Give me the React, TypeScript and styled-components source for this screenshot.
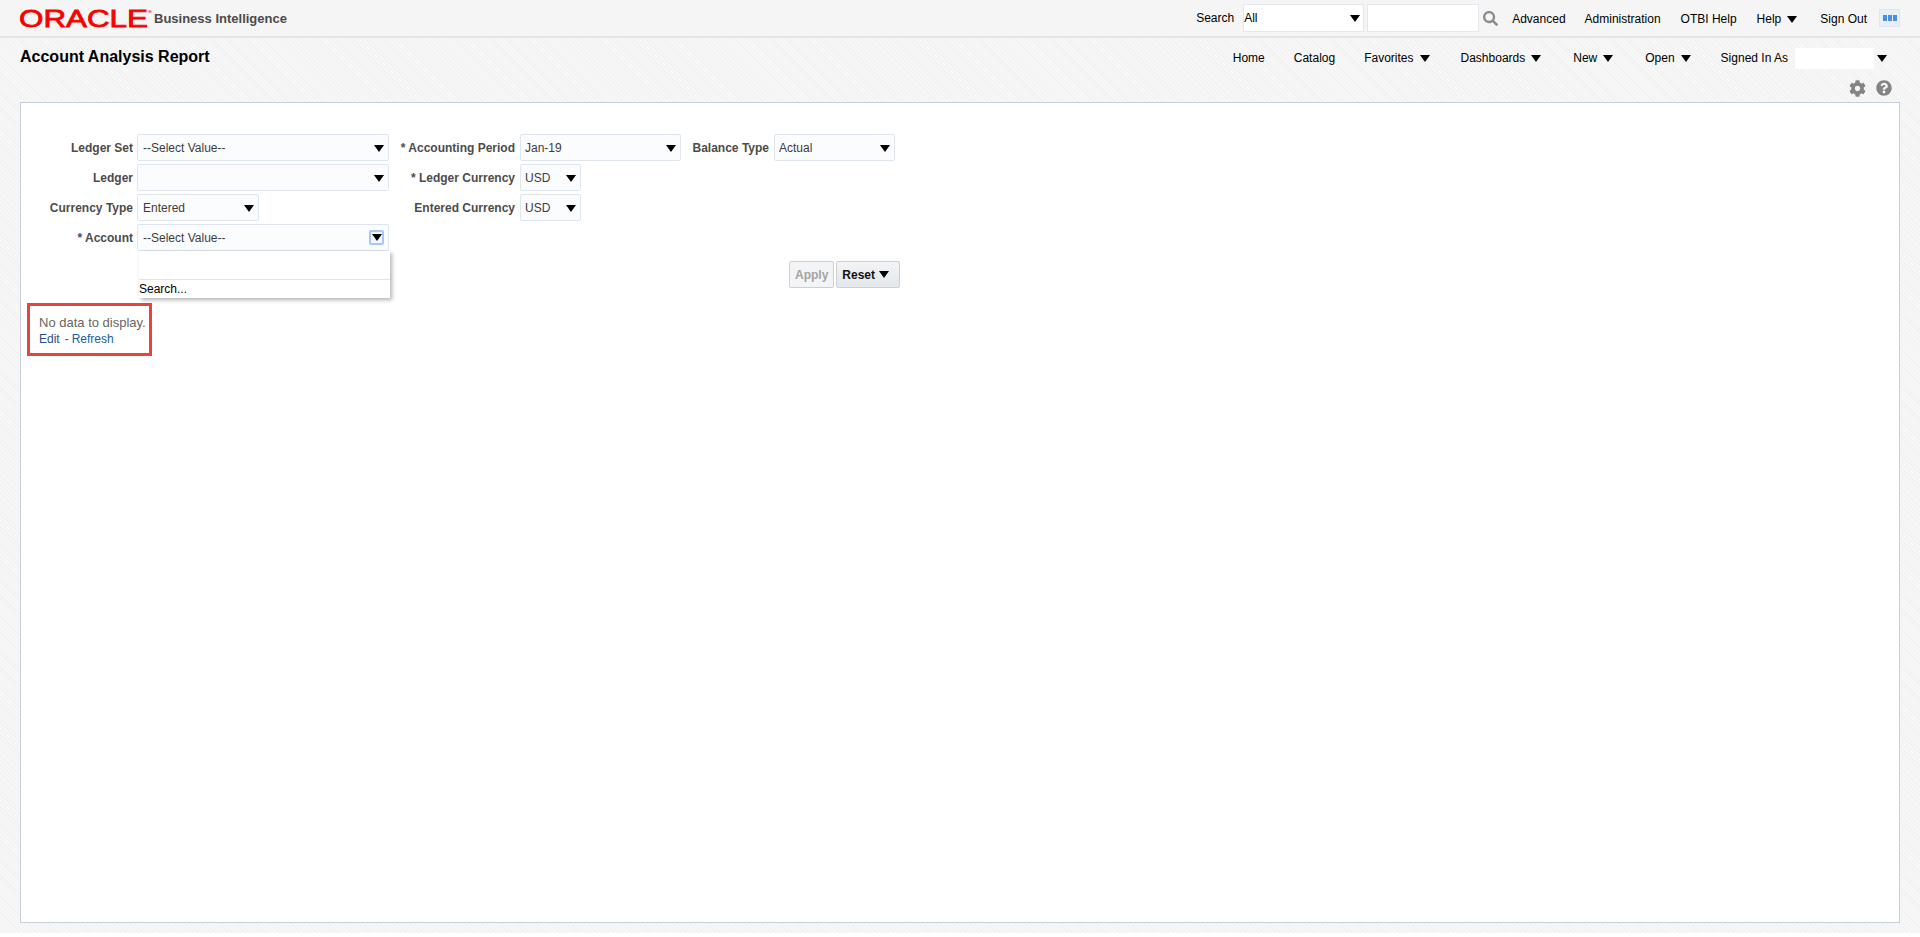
import styled, { createGlobalStyle } from 'styled-components'
import { FaCog, FaQuestionCircle, FaSearch } from 'react-icons/fa'

const Global = createGlobalStyle`
  html, body {
    margin: 0;
    padding: 0;
    background: #fff;
  }
  body {
    font-family: "Liberation Sans", Arial, sans-serif;
    font-size: 12px;
    color: #000;
  }
`

const Page = styled.div`
  height: 933px;
  display: flex;
  flex-direction: column;
  background: repeating-linear-gradient(45deg, #f7f7f7 0, #f7f7f7 2px, #f1f1f1 2px, #f1f1f1 3px);
`

const Header = styled.header`
  height: 36px;
  flex: none;
  display: flex;
  justify-content: space-between;
  align-items: center;
  padding: 0 20px;
  background: #f5f5f5;
  border-bottom: 2px solid #e6e6e6;
`

const Brand = styled.div`
  display: flex;
  align-items: center;
  gap: 2px;
`

const Logo = styled.svg`
  display: block;
  width: 132px;
  height: 32px;
`

const AppName = styled.span`
  font-size: 13px;
  font-weight: 700;
  color: #4a4a4a;
`

const Tools = styled.div`
  display: flex;
  align-items: center;
`

const ToolLink = styled.span<{ $left?: number }>`
  margin-left: ${p => p.$left ?? 20}px;
  white-space: nowrap;
  display: flex;
  align-items: center;
  gap: 6px;
  position: relative;
  top: 1px;
`

const SearchLabel = styled.span`
  margin-right: 9px;
`

const SearchBox = styled.div<{ $width: number }>`
  box-sizing: border-box;
  width: ${p => p.$width}px;
  height: 28px;
  display: flex;
  align-items: center;
  justify-content: space-between;
  padding: 0 3px 0 0;
  margin-right: 3px;
  background: #fff;
  border: 1px solid #e3e8ee;
`

const SearchIcon = styled(FaSearch)`
  width: 15px;
  height: 15px;
  color: #8c8c8c;
  margin-left: 1px;
`

const AppsButton = styled.div`
  box-sizing: border-box;
  width: 21px;
  height: 18px;
  margin-left: 12px;
  display: flex;
  align-items: center;
  justify-content: center;
  gap: 1px;
  background: #e9eff6;
  border: 1px solid #dfe6ee;
`

const AppsBar = styled.i`
  width: 4px;
  height: 6px;
  background: #4a90e2;
`

const Caret = styled.i`
  flex: none;
  width: 0;
  height: 0;
  border-left: 5px solid transparent;
  border-right: 5px solid transparent;
  border-top: 7px solid #000;
`

const SelectCaret = styled(Caret)`
  margin-top: 2px;
`

const TitleBar = styled.div`
  height: 40px;
  flex: none;
  display: flex;
  justify-content: space-between;
  align-items: center;
  padding: 0 33px 0 20px;
`

const Title = styled.h1`
  margin: -2px 0 0;
  font-size: 16px;
  font-weight: 700;
  line-height: 20px;
`

const MainNav = styled.nav`
  display: flex;
  align-items: center;
`

const NavItem = styled.span<{ $left?: number }>`
  margin-left: ${p => p.$left ?? 0}px;
  display: flex;
  align-items: center;
  gap: 6px;
  white-space: nowrap;
`

const User = styled.span`
  margin-left: 30px;
  display: flex;
  align-items: center;
  gap: 3px;
`

const UserName = styled.span`
  width: 79px;
  height: 21px;
  margin-left: 4px;
  background: #fff;
`

const IconRow = styled.div`
  height: 24px;
  flex: none;
  display: flex;
  justify-content: flex-end;
  align-items: center;
  gap: 10px;
  padding: 0 28px 4px 0;
  box-sizing: border-box;
  color: #848484;
`

const GearIcon = styled(FaCog)`
  width: 17px;
  height: 17px;
`

const HelpIcon = styled(FaQuestionCircle)`
  width: 16px;
  height: 16px;
`

const Panel = styled.main`
  flex: 1;
  margin: 0 20px 10px;
  background: #fff;
  border: 1px solid #c5cfdc;
  padding-top: 31px;
`

const Form = styled.div`
  display: grid;
  grid-template-columns: 112px 4px 252px 126px 5px 161px 88px 5px 121px;
  grid-auto-rows: 27px;
  row-gap: 3px;
  width: 874px;
`

const Label = styled.label<{ $col: number }>`
  grid-column: ${p => p.$col};
  display: flex;
  align-items: center;
  justify-content: flex-end;
  font-weight: 700;
  color: #4c4c4c;
  white-space: nowrap;
`

const Select = styled.div<{ $col: number; $width?: string; $tight?: boolean }>`
  grid-column: ${p => p.$col};
  box-sizing: border-box;
  width: ${p => p.$width ?? '100%'};
  position: relative;
  display: flex;
  align-items: center;
  justify-content: space-between;
  padding: 0 4px 0 ${p => (p.$tight ? 4 : 5)}px;
  background: #fbfcfe;
  border: 1px solid #dfe5ec;
  border-radius: 2px;
  color: #3c3c3c;
`

const FocusBox = styled.span`
  box-sizing: border-box;
  width: 15px;
  height: 15px;
  display: flex;
  align-items: center;
  justify-content: center;
  border: 2px solid #a9c6f9;
  border-radius: 2px;
  background: #f4f7fd;
`

const Popup = styled.div`
  position: absolute;
  top: 26px;
  left: 1px;
  width: 251px;
  height: 47px;
  background: #fff;
  box-shadow: 2px 2px 4px rgba(0, 0, 0, 0.3);
  z-index: 2;
`

const PopupBlank = styled.div`
  height: 29px;
  box-sizing: border-box;
  border-bottom: 1px solid #e3e3e3;
`

const PopupItem = styled.div`
  line-height: 18px;
  color: #000;
`

const Actions = styled.div`
  width: 879px;
  margin-top: 10px;
  display: flex;
  justify-content: flex-end;
  gap: 2px;
`

const Button = styled.button<{ $disabled?: boolean }>`
  box-sizing: border-box;
  height: 27px;
  padding: ${p => (p.$disabled ? '0 5px' : '0 10px 0 5px')};
  display: flex;
  align-items: center;
  gap: 4px;
  font: 700 12px "Liberation Sans", Arial, sans-serif;
  color: ${p => (p.$disabled ? '#a3a3a3' : '#111')};
  background: ${p => (p.$disabled ? '#f3f4f6' : 'linear-gradient(#f2f4f6, #e3e7ea)')};
  border: 1px solid #c9d0d6;
  border-radius: 2px;
`

const Notice = styled.div`
  box-sizing: border-box;
  width: 125px;
  height: 53px;
  margin: 15px 0 0 6px;
  padding: 9px 0 0 9px;
  border: 3px solid #e8433f;
`

const NoticeText = styled.div`
  font-size: 13px;
  line-height: 16px;
  color: #666;
`

const NoticeLinks = styled.div`
  line-height: 16px;
  color: #555;
`

const NoticeDash = styled.span`
  margin: 0 3px 0 5px;
`

const NoticeLink = styled.a<{ $dark?: boolean }>`
  color: ${p => (p.$dark ? '#2c4f8c' : '#17609f')};
  text-decoration: none;
`

const App = () => {
  return (
    <Page>
      <Global />
      <Header>
        <Brand>
          <Logo viewBox="0 0 132 32">
            <text
              x="-1"
              y="24.5"
              textLength="129"
              lengthAdjust="spacingAndGlyphs"
              fontFamily="Liberation Sans"
              fontSize="24.5"
              fill="#f80000"
              stroke="#f80000"
              strokeWidth="0.8"
            >
              ORACLE
            </text>
            <circle cx="130" cy="9.5" r="1.6" fill="#f08080" />
          </Logo>
          <AppName>Business Intelligence</AppName>
        </Brand>
        <Tools>
          <SearchLabel>Search</SearchLabel>
          <SearchBox $width={121}>
            All
            <Caret />
          </SearchBox>
          <SearchBox $width={112} />
          <SearchIcon />
          <ToolLink $left={14}>Advanced</ToolLink>
          <ToolLink $left={19}>Administration</ToolLink>
          <ToolLink>OTBI Help</ToolLink>
          <ToolLink>
            Help
            <Caret />
          </ToolLink>
          <ToolLink $left={23}>Sign Out</ToolLink>
          <AppsButton>
            <AppsBar />
            <AppsBar />
            <AppsBar />
          </AppsButton>
        </Tools>
      </Header>

      <TitleBar>
        <Title>Account Analysis Report</Title>
        <MainNav>
          <NavItem>Home</NavItem>
          <NavItem $left={29}>Catalog</NavItem>
          <NavItem $left={29}>
            Favorites
            <Caret />
          </NavItem>
          <NavItem $left={31}>
            Dashboards
            <Caret />
          </NavItem>
          <NavItem $left={32}>
            New
            <Caret />
          </NavItem>
          <NavItem $left={32}>
            Open
            <Caret />
          </NavItem>
          <User>
            Signed In As
            <UserName />
            <Caret />
          </User>
        </MainNav>
      </TitleBar>

      <IconRow>
        <GearIcon />
        <HelpIcon />
      </IconRow>

      <Panel>
        <Form>
          <Label $col={1}>Ledger Set</Label>
          <Select $col={3}>
            --Select Value--
            <SelectCaret />
          </Select>
          <Label $col={4}>* Accounting Period</Label>
          <Select $col={6} $tight>
            Jan-19
            <SelectCaret />
          </Select>
          <Label $col={7}>Balance Type</Label>
          <Select $col={9} $tight>
            Actual
            <SelectCaret />
          </Select>

          <Label $col={1}>Ledger</Label>
          <Select $col={3}>
            <span />
            <SelectCaret />
          </Select>
          <Label $col={4}>* Ledger Currency</Label>
          <Select $col={6} $width="61px" $tight>
            USD
            <SelectCaret />
          </Select>

          <Label $col={1}>Currency Type</Label>
          <Select $col={3} $width="122px">
            Entered
            <SelectCaret />
          </Select>
          <Label $col={4}>Entered Currency</Label>
          <Select $col={6} $width="61px" $tight>
            USD
            <SelectCaret />
          </Select>

          <Label $col={1}>* Account</Label>
          <Select $col={3}>
            --Select Value--
            <FocusBox>
              <Caret />
            </FocusBox>
            <Popup>
              <PopupBlank />
              <PopupItem>Search...</PopupItem>
            </Popup>
          </Select>
        </Form>

        <Actions>
          <Button $disabled>Apply</Button>
          <Button>
            Reset
            <Caret />
          </Button>
        </Actions>

        <Notice>
          <NoticeText>No data to display.</NoticeText>
          <NoticeLinks>
            <NoticeLink $dark>Edit</NoticeLink>
            <NoticeDash>-</NoticeDash>
            <NoticeLink>Refresh</NoticeLink>
          </NoticeLinks>
        </Notice>
      </Panel>
    </Page>
  )
}

export default App
